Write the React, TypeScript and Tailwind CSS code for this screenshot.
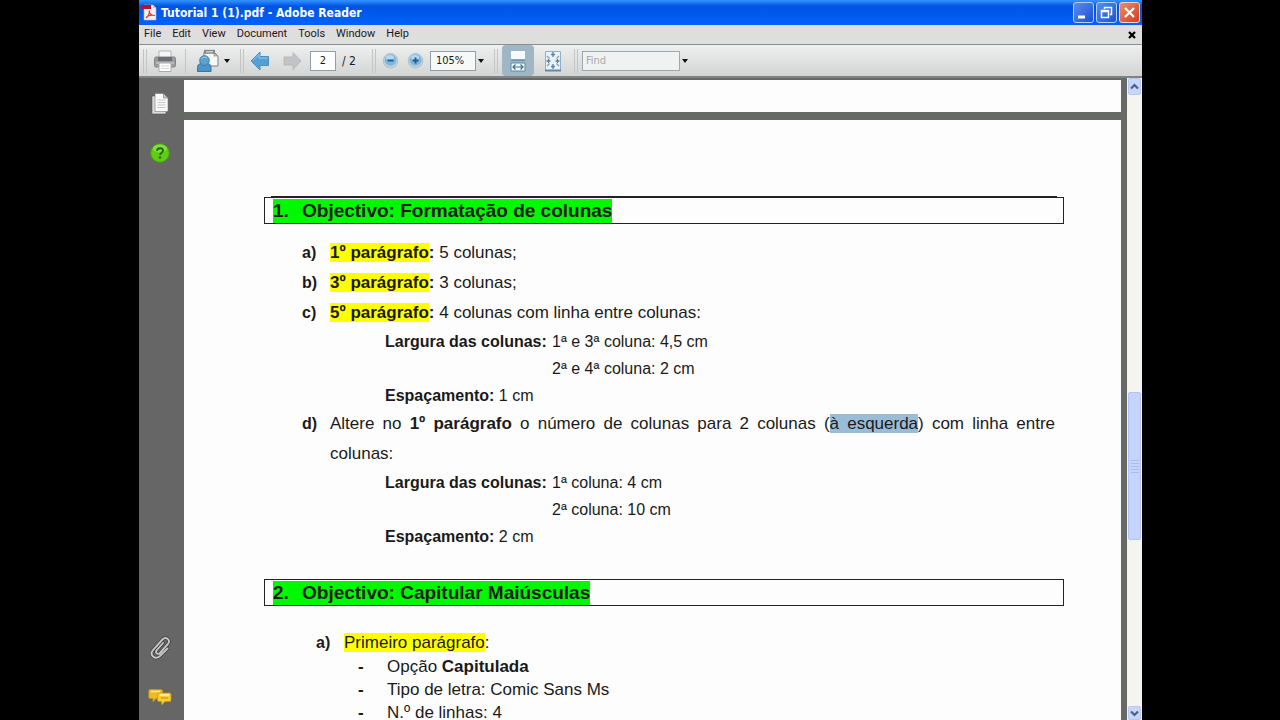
import type { ReactNode } from "react";

function PdfIcon() {
  return (
    <svg width="17" height="17" viewBox="0 0 17 17" aria-hidden="true">
      <path d="M4 1h9l3 3v12H4z" fill="#f4f1f4" stroke="#b9b4cf" strokeWidth=".6" />
      <path d="M13 1v3h3z" fill="#c9c6dd" />
      <path d="M1 1h10v4H1z" fill="#c3121c" />
      <path d="M6 14c2-1 4-5 3.600-7.500M9 7c.5 3 3 4.500 6 4.500M6 13.500c2.500-2.500 6-2.500 9-2" fill="none" stroke="#e0332e" strokeWidth="1.200" />
    </svg>
  );
}

function PrinterIcon() {
  return (
    <svg width="24" height="24" viewBox="0 0 24 24" aria-hidden="true">
      <path d="M6 2h12v8H6z" fill="#f7f7f7" stroke="#b5b5b5" />
      <rect x="1.500" y="8" width="21" height="10" rx="1.500" fill="#999b9c" stroke="#858788" />
      <path d="M5 8h14v4H5z" fill="#6c6f71" />
      <path d="M3 13h18v2H3z" fill="#bcbcbc" />
      <path d="M6 14h12v8.500H6z" fill="#fff" stroke="#aaa" />
      <path d="M8 17h8M8 19.500h8" stroke="#d5d5d5" />
    </svg>
  );
}

function CollaborateIcon() {
  return (
    <svg width="24" height="24" viewBox="0 0 24 24" aria-hidden="true">
      <path d="M8 3h10l4 4v10H8z" fill="#f8f8f8" stroke="#7d7f82" />
      <path d="M17.500 3v4.500H22z" fill="#a9abad" />
      <path d="M8 .8h11v4H8z" fill="#85888b" />
      <path d="M10 2.800h7" stroke="#dcdcdc" strokeWidth="1.200" />
      <path d="M1.500 22.500v-4c0-3 2-4 4-4l2.500 2 2.500-2c3 0 4.500 1 4.500 4v4z" fill="#4b94c4" stroke="#33759f" />
      <circle cx="8.500" cy="11.500" r="4.800" fill="#5ca2ce" stroke="#3c7fab" />
      <path d="M5.500 10c1-2 4-2.500 5.500-1" stroke="#a5d0ea" fill="none" />
    </svg>
  );
}

function ArrowIcon({ forward }: { forward?: boolean }) {
  return forward ? (
    <svg width="20" height="20" viewBox="0 0 20 20" aria-hidden="true">
      <path d="M19 10 11 1.500V6H2v8h9v4.500z" fill="#c2c3c4" stroke="#b8b9ba" strokeLinejoin="round" />
    </svg>
  ) : (
    <svg width="20" height="20" viewBox="0 0 20 20" aria-hidden="true">
      <path d="M1 10 10 1v4.500h8.500v9H10V19z" fill="#559fd3" stroke="#4a8fc0" strokeLinejoin="round" />
      <path d="M3 9.500 9 3.500V7h8.500" fill="none" stroke="#93c9ec" />
    </svg>
  );
}

function ZoomIcon({ plus }: { plus?: boolean }) {
  return (
    <svg width="17" height="17" viewBox="0 0 17 17" aria-hidden="true">
      <circle cx="8.500" cy="8.800" r="7.300" fill="#b9cfdc" stroke="#b4c0c8" />
      <circle cx="8.500" cy="8" r="5.800" fill="#7fb7db" />
      <ellipse cx="8" cy="5.500" rx="4" ry="2.500" fill="#b4d9ee" />
      <path d={plus ? "M5.500 8.500h6M8.500 5.500v6" : "M5.500 8.500h6"} stroke="#1d5f96" strokeWidth="2" />
    </svg>
  );
}

function FitWidthIcon() {
  return (
    <svg width="18" height="22" viewBox="0 0 18 22" aria-hidden="true">
      <path d="M2 1h14v9H2z" fill="#f5fafd" />
      <path d="M2 10h14" stroke="#5b8aa8" strokeWidth="1.500" />
      <path d="M2 13h14v8H2z" fill="#f5fafd" stroke="#5b8aa8" />
      <path d="M4 17h10M6.500 14.500 4 17l2.500 2.500M11.500 14.500 14 17l-2.500 2.500" fill="none" stroke="#3b7096" strokeWidth="1.200" />
    </svg>
  );
}

function FitPageIcon() {
  return (
    <svg width="18" height="22" viewBox="0 0 18 22" aria-hidden="true">
      <path d="M1.500 1.500h15v19h-15z" fill="#e9f2f8" stroke="#8fb0c6" />
      <path d="M1 20.500h16" stroke="#5d89ab" strokeWidth="2" />
      <path d="M9 2v5M7 4.500h4M9 19v-5M7 16.500h4M2.500 11h4M4.500 9v4M15.500 11h-4M13.500 9v4" fill="none" stroke="#5f7f98" strokeWidth="1.300" />
      <path d="M3 6l2.500 2.500M15 6l-2.500 2.500M3 16l2.500-2.500M15 16l-2.500-2.500" stroke="#7da3bf" strokeWidth="1.300" />
    </svg>
  );
}

function PagesIcon() {
  return (
    <svg width="20" height="24" viewBox="0 0 20 24" aria-hidden="true">
      <path d="M2 4h10l4 4v14H2z" fill="#dcdcdc" stroke="#555" strokeWidth=".6" />
      <path d="M5 1.500h8.500l4.500 4.500v13.500H5z" fill="#fafafa" stroke="#777" strokeWidth=".6" />
      <path d="M13.500 1.500V6H18z" fill="#c4c4c4" stroke="#777" strokeWidth=".6" />
      <path d="M7.500 8h8M7.500 10.500h8M7.500 13h8M7.500 15.500h8" stroke="#c7c7c7" />
    </svg>
  );
}

function HelpIcon() {
  return (
    <svg width="20" height="20" viewBox="0 0 20 20" aria-hidden="true">
      <circle cx="10" cy="10" r="9.300" fill="#5fce12" stroke="#469c12" />
      <ellipse cx="10" cy="5.500" rx="7" ry="4" fill="#80e03c" />
      <path d="M7 7.800c.3-3.600 6-3.300 6-.2 0 2.200-2.900 2.100-2.900 4.300" fill="none" stroke="#23670d" strokeWidth="1.900" />
      <circle cx="10" cy="14.500" r="1.200" fill="#23670d" />
    </svg>
  );
}

function ClipIcon() {
  return (
    <svg width="22" height="24" viewBox="0 0 22 24" aria-hidden="true">
      <path d="M18.500 12.500 11 20c-5 4.500-11-1-7-6L13.500 3.500c3.500-3.500 8.500.5 5.500 4.500l-8 9c-2 2-5 0-3.500-2.500l6.500-7.500" fill="none" stroke="#383838" strokeWidth="3.200" strokeLinecap="round" />
      <path d="M18.500 12.500 11 20c-5 4.500-11-1-7-6L13.500 3.500c3.500-3.500 8.500.5 5.500 4.500l-8 9c-2 2-5 0-3.500-2.500l6.500-7.500" fill="none" stroke="#c7c7c7" strokeWidth="1.900" strokeLinecap="round" />
    </svg>
  );
}

function CommentsIcon() {
  return (
    <svg width="24" height="18" viewBox="0 0 24 18" aria-hidden="true">
      <path d="M2 1.500h11q1.500 0 1.500 1.500v6q0 1.500-1.500 1.500H8L5 14v-3.500H2Q.8 10.500.8 9V3Q.8 1.500 2 1.500z" fill="#eebb20" stroke="#c79413" strokeWidth=".7" />
      <path d="M3 3.500h9" stroke="#fff09b" strokeWidth="1.500" />
      <path d="M11 5h10.500q1.500 0 1.500 1.500V12q0 1.500-1.500 1.500H17l-3.500 3.500v-3.500H11q-1.500 0-1.500-1.500V6.500Q9.500 5 11 5z" fill="#f7cf35" stroke="#c79413" strokeWidth=".7" />
      <path d="M12 7h9" stroke="#fff6b0" strokeWidth="1.500" />
      <path d="M13 10h7" stroke="#dcae1c" strokeWidth="2" />
    </svg>
  );
}

function Caret() {
  return (
    <svg width="6" height="4" viewBox="0 0 6 4" aria-hidden="true">
      <path d="M0 0h6L3 4z" fill="#111" />
    </svg>
  );
}

function Chevron({ down }: { down?: boolean }) {
  return (
    <svg width="9" height="7" viewBox="0 0 9 7" aria-hidden="true">
      <path d={down ? "M1 1.500 4.500 5 8 1.500" : "M1 5.500 4.500 2 8 5.500"} fill="none" stroke="#4d6185" strokeWidth="2.200" />
    </svg>
  );
}

function Grip() {
  return <span className="h-6 w-1 shrink-0 border-x border-[#c3c5c5]" />;
}

function WindowButton({ label, close, children }: { label: string; close?: boolean; children: ReactNode }) {
  return (
    <button
      type="button"
      aria-label={label}
      className={
        close
          ? "flex size-[21px] items-center justify-center rounded-[3px] border border-[#f3d5cf] bg-linear-to-br from-[#ee8a68] to-[#cf3c14]"
          : "flex size-[21px] items-center justify-center rounded-[3px] border border-[#b6cdf8] bg-linear-to-br from-[#5c8df0] to-[#1c4fd0]"
      }
    >
      <svg width="15" height="15" viewBox="0 0 15 15" fill="none" stroke="#fff" aria-hidden="true">
        {children}
      </svg>
    </button>
  );
}

function SectionTitle({ number, children }: { number: string; children: ReactNode }) {
  return (
    <h2 className="flex h-[27px] items-center border border-[#222] pl-2 text-[19px] leading-6 font-bold">
      <span className="flex bg-[#00f900] whitespace-nowrap">
        <span className="w-[29px]">{number}</span>
        <span>{children}</span>
      </span>
    </h2>
  );
}

function Item({ letter, children }: { letter: string; children: ReactNode }) {
  return (
    <div className="flex pr-[9px] pl-[38px] leading-[30px]">
      <b className="w-7 shrink-0 text-[16px]">{letter}</b>
      <p className="grow text-justify text-[17px]">{children}</p>
    </div>
  );
}

function Detail({ label, children }: { label?: string; children: ReactNode }) {
  return (
    <div className="flex pl-[121px] text-[16px] leading-[27px]">
      <b className="w-[167px] shrink-0">{label}</b>
      <span>{children}</span>
    </div>
  );
}

function Spacing({ children }: { children: ReactNode }) {
  return (
    <p className="pl-[121px] text-[16px] leading-[27px]">
      <b>Espaçamento:</b> {children}
    </p>
  );
}

function Option({ children }: { children: ReactNode }) {
  return (
    <li className="flex pl-[94px] leading-[23px]">
      <b className="w-[29px] shrink-0">-</b>
      <span>{children}</span>
    </li>
  );
}

function Mark({ children }: { children: ReactNode }) {
  return <mark className="bg-[#ffff00] text-inherit">{children}</mark>;
}

const menus = ["File", "Edit", "View", "Document", "Tools", "Window", "Help"];

export default function App() {
  return (
    <div className="h-screen overflow-hidden bg-black pr-[138px] pl-[139px] font-['DejaVu_Sans_Condensed','DejaVu_Sans',sans-serif] text-[11px] text-[#1a1a1a]">
      <div className="flex h-full flex-col">
        <header className="flex h-[25px] shrink-0 items-center gap-1 bg-linear-to-b from-[#3593ff] via-[#0054e3] via-25% to-[#0062fb] pr-0.5 pl-px">
          <PdfIcon />
          <h1 className="grow text-[12px] font-bold text-white">Tutorial 1 (1).pdf - Adobe Reader</h1>
          <div className="flex gap-0.5">
            <WindowButton label="Minimize">
              <path d="M2 12h7" strokeWidth="3" />
            </WindowButton>
            <WindowButton label="Restore">
              <path d="M5.500 4V2.500h7v7H11M2.500 5.500h7v7h-7zM2.500 6.500h7" strokeWidth="1.500" />
            </WindowButton>
            <WindowButton label="Close" close>
              <path d="m3 3 9 9M12 3l-9 9" strokeWidth="2.200" />
            </WindowButton>
          </div>
        </header>

        <nav className="flex h-5 shrink-0 items-center gap-[11px] border-b border-[#8c8e8f] bg-[#dededd] pr-1.5 pl-[5px] font-[Roboto,sans-serif]">
          {menus.map((name) => (
            <button key={name} type="button">
              {name}
            </button>
          ))}
          <button type="button" aria-label="Close document" className="ml-auto">
            <svg width="8" height="8" viewBox="0 0 8 8" aria-hidden="true">
              <path d="m1 1 6 6M7 1 1 7" stroke="#000" strokeWidth="2.200" />
            </svg>
          </button>
        </nav>

        <div className="flex h-[33px] shrink-0 items-center border-b-2 border-[#808283] bg-linear-to-b from-[#eeefef] to-[#d3d5d5] pl-1">
          <Grip />
          <button type="button" aria-label="Print" className="ml-1.5">
            <PrinterIcon />
          </button>
          <span className="ml-2 h-6 w-px bg-[#c3c5c5]" />
          <button type="button" aria-label="Collaborate" className="ml-2.5 flex items-center gap-1">
            <CollaborateIcon />
            <Caret />
          </button>
          <span className="ml-2.5 flex">
            <Grip />
          </span>
          <button type="button" aria-label="Previous page" className="ml-1.5">
            <ArrowIcon />
          </button>
          <button type="button" aria-label="Next page" className="ml-3">
            <ArrowIcon forward />
          </button>
          <input aria-label="Page number" defaultValue="2" className="ml-2 h-5 w-[26px] border border-[#8fa0ad] bg-white text-center" />
          <span className="ml-1.5 text-[12px]">/ 2</span>
          <span className="ml-4 flex">
            <Grip />
          </span>
          <button type="button" aria-label="Zoom out" className="ml-1.5">
            <ZoomIcon />
          </button>
          <button type="button" aria-label="Zoom in" className="ml-2">
            <ZoomIcon plus />
          </button>
          <input aria-label="Zoom level" defaultValue="105%" className="ml-1.5 h-5 w-[46px] border border-[#8fa0ad] bg-[#f7f8f8] pl-[5px]" />
          <button type="button" aria-label="Zoom presets" className="ml-0.5">
            <Caret />
          </button>
          <span className="ml-2.5 flex">
            <Grip />
          </span>
          <button type="button" aria-label="Fit width" className="ml-1 flex h-[31px] w-8 items-center justify-center rounded-sm bg-[#9fb6c4]">
            <FitWidthIcon />
          </button>
          <button type="button" aria-label="Fit page" className="ml-2.5">
            <FitPageIcon />
          </button>
          <span className="ml-3 flex">
            <Grip />
          </span>
          <input aria-label="Find" placeholder="Find" className="ml-1 h-5 w-[98px] border border-[#a0a8ae] bg-[#f0f1f1] pl-[3px] placeholder:text-[#a9a9a9]" />
          <button type="button" aria-label="Find options" className="ml-0.5">
            <Caret />
          </button>
        </div>

        <div className="flex min-h-0 grow bg-[#676967]">
          <aside className="flex w-[45px] shrink-0 flex-col items-center justify-between bg-[#666] pt-3.5 pr-1 pb-3.5">
            <div className="flex flex-col items-center gap-[27px]">
              <button type="button" aria-label="Pages">
                <PagesIcon />
              </button>
              <button type="button" aria-label="Help">
                <HelpIcon />
              </button>
            </div>
            <div className="flex flex-col items-center gap-7">
              <button type="button" aria-label="Attachments">
                <ClipIcon />
              </button>
              <button type="button" aria-label="Comments">
                <CommentsIcon />
              </button>
            </div>
          </aside>

          <main className="flex min-w-0 grow flex-col gap-2 overflow-hidden pt-[2px] font-['Liberation_Sans',sans-serif]">
            <div className="h-8 shrink-0 bg-[#fdfdfd]" />
            <article className="shrink-0 bg-[#fdfdfd] pt-[76px] pr-[57px] pb-10 pl-20">
              <div className="mx-[7px] h-px bg-[#222]" />
              <SectionTitle number="1.">Objectivo: Formatação de colunas</SectionTitle>
              <div className="pt-3.5">
                <Item letter="a)">
                  <b>
                    <Mark>1º parágrafo</Mark>:
                  </b>{" "}
                  5 colunas;
                </Item>
                <Item letter="b)">
                  <b>
                    <Mark>3º parágrafo</Mark>:
                  </b>{" "}
                  3 colunas;
                </Item>
                <Item letter="c)">
                  <b>
                    <Mark>5º parágrafo</Mark>:
                  </b>{" "}
                  4 colunas com linha entre colunas:
                </Item>
                <Detail label="Largura das colunas:">1ª e 3ª coluna: 4,5 cm</Detail>
                <Detail>2ª e 4ª coluna: 2 cm</Detail>
                <Spacing>1 cm</Spacing>
                <Item letter="d)">
                  Altere no <b>1º parágrafo</b> o número de colunas para 2 colunas (
                  <mark className="bg-[#9bbcd6] text-inherit">à esquerda</mark>) com linha entre colunas:
                </Item>
                <Detail label="Largura das colunas:">1ª coluna: 4 cm</Detail>
                <Detail>2ª coluna: 10 cm</Detail>
                <Spacing>2 cm</Spacing>
              </div>
              <div className="pt-[29px]">
                <SectionTitle number="2.">Objectivo: Capitular Maiúsculas</SectionTitle>
              </div>
              <div className="pt-[25px] text-[17px]">
                <div className="flex pl-[52px] leading-6">
                  <b className="w-7 shrink-0 text-[16px]">a)</b>
                  <p>
                    <Mark>Primeiro parágrafo</Mark>:
                  </p>
                </div>
                <ul>
                  <Option>
                    Opção <b>Capitulada</b>
                  </Option>
                  <Option>Tipo de letra: Comic Sans Ms</Option>
                  <Option>N.º de linhas: 4</Option>
                </ul>
              </div>
            </article>
          </main>

          <div className="ml-1.5 flex w-[15px] shrink-0 flex-col bg-[#f5f4f1] px-px" role="scrollbar" aria-label="Document scroll" aria-controls="root" aria-valuenow={60}>
            <button type="button" aria-label="Scroll up" className="flex h-[17px] shrink-0 items-center justify-center rounded-xs border border-[#b4c8f6] bg-[#c8d6fb]">
              <Chevron />
            </button>
            <div className="grow-298 basis-0" />
            <div className="flex grow-147 basis-0 flex-col items-center justify-center gap-px rounded-xs border border-[#b0c3f3] bg-[#c6d3fc]">
              {[0, 1, 2, 3, 4].map((line) => (
                <span key={line} className="h-px w-2 border-b border-[#a9bdf0] pb-px" />
              ))}
            </div>
            <div className="grow-167 basis-0" />
            <button type="button" aria-label="Scroll down" className="flex h-3.5 shrink-0 items-center justify-center rounded-xs border border-[#b4c8f6] bg-[#c8d6fb]">
              <Chevron down />
            </button>
          </div>
        </div>
      </div>
    </div>
  );
}
